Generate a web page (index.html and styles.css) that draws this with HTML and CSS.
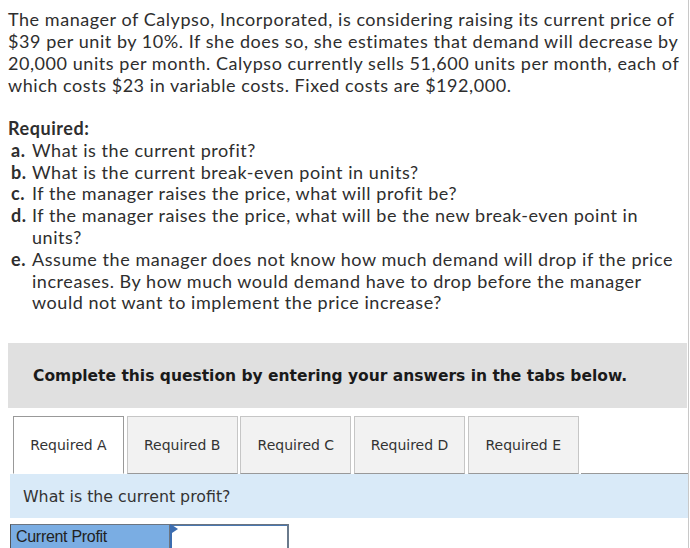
FILE: index.html
```html
<!DOCTYPE html>
<html>
<head>
<meta charset="utf-8">
<link rel="stylesheet" href="styles.css">
</head>
<body>
<div class="page">
  <p class="intro">The manager of Calypso, Incorporated, is considering raising its current price of<br>$39 per unit by 10%. If she does so, she estimates that demand will decrease by<br>20,000 units per month. Calypso currently sells 51,600 units per month, each of<br>which costs $23 in variable costs. Fixed costs are $192,000.</p>
  <div class="required">
    <div class="req-title">Required:</div>
    <ol class="req-list">
      <li><b>a.</b><span>What is the current profit?</span></li>
      <li><b>b.</b><span>What is the current break-even point in units?</span></li>
      <li><b>c.</b><span>If the manager raises the price, what will profit be?</span></li>
      <li><b>d.</b><span>If the manager raises the price, what will be the new break-even point in<br>units?</span></li>
      <li><b>e.</b><span>Assume the manager does not know how much demand will drop if the price<br>increases. By how much would demand have to drop before the manager<br>would not want to implement the price increase?</span></li>
    </ol>
  </div>
  <div class="banner">Complete this question by entering your answers in the tabs below.</div>
  <div class="tabs">
    <div class="tab active">Required A</div>
    <div class="tab">Required B</div>
    <div class="tab">Required C</div>
    <div class="tab">Required D</div>
    <div class="tab">Required E</div>
    <div class="tab-fill"></div>
  </div>
  <div class="panel">What is the current profit?</div>
  <div class="answer-row">
    <div class="label-cell">Current Profit</div>
    <div class="input-cell"><span class="marker"></span></div>
  </div>
</div>
</body>
</html>
```
FILE: styles.css
```css
html, body {
  margin: 0;
  padding: 0;
  background: #fff;
}
.page {
  width: 680px;
  padding-left: 8px;
  border-right: 1px solid #c8c8c8;
  min-height: 548px;
  box-sizing: content-box;
  overflow: hidden;
}
.intro {
  margin: 0;
  padding-top: 8px;
  font-family: "Lato", sans-serif;
  font-size: 18px;
  letter-spacing: 0.55px;
  font-variant-ligatures: none;
  line-height: 22px;
  color: #2e2e2e;
  white-space: nowrap;
}
.required {
  margin-top: 22px;
  font-family: "Lato", sans-serif;
  font-size: 18px;
  letter-spacing: 0.55px;
  font-variant-ligatures: none;
  line-height: 21.8px;
  color: #2e2e2e;
  white-space: nowrap;
}
.req-title {
  font-weight: bold;
}
.req-list {
  list-style: none;
  margin: 0;
  padding: 0 0 0 3px;
}
.req-list li {
  display: flex;
}
.req-list li b {
  width: 21px;
  flex: none;
}
.banner {
  margin-top: 29px;
  margin-right: 1px;
  background: #e0e0e0;
  height: 65px;
  display: flex;
  align-items: center;
  padding-left: 25px;
  font-family: "DejaVu Sans", sans-serif;
  font-weight: bold;
  font-size: 15.5px;
  color: #1a1a1a;
}
.tabs {
  display: flex;
  gap: 2.7px;
  margin-top: 8px;
  padding-left: 3px;
  height: 58px;
  margin-left: 2px;
}
.tab {
  width: 111px;
  border: 1px solid #c6c6c6;
  border-bottom: 1px solid #999;
  background: #f2f2f2;
  display: flex;
  align-items: center;
  justify-content: center;
  font-family: "DejaVu Sans", sans-serif;
  font-size: 14px;
  color: #333;
  box-sizing: border-box;
  height: 58px;
}
.tab.active {
  background: #fff;
  border-color: #999;
  border-bottom-color: #fff;
}
.tab-fill {
  flex: 1;
  border-bottom: 1px solid #999;
}
.panel {
  margin-left: 2px;
  background: #d9eaf8;
  height: 44px;
  display: flex;
  align-items: center;
  padding-left: 13px;
  font-family: "DejaVu Sans", sans-serif;
  font-size: 15.8px;
  color: #333;
}
.answer-row {
  display: flex;
  margin-top: 6px;
  margin-left: 2px;
  height: 26px;
}
.label-cell {
  width: 160px;
  background: #7aade3;
  border: 1px solid #6b7480;
  border-left-color: #555;
  border-bottom: none;
  box-sizing: border-box;
  font-family: "Liberation Sans", sans-serif;
  font-size: 16px;
  letter-spacing: -0.3px;
  color: #222;
  padding: 3px 0 0 5px;
}
.input-cell {
  position: relative;
  width: 119px;
  border-top: 1px solid #6b7480;
  border-left: 2px solid #3c6db0;
  border-right: 2px solid #6a7a8c;
  box-shadow: inset 0 1px 0 #4a78b0;
  box-sizing: border-box;
  background: #fff;
}
.marker {
  position: absolute;
  left: 0;
  top: 0;
  width: 0;
  height: 0;
  border-top: 4px solid transparent;
  border-bottom: 4px solid transparent;
  border-left: 6px solid #3c6db0;
}
```
